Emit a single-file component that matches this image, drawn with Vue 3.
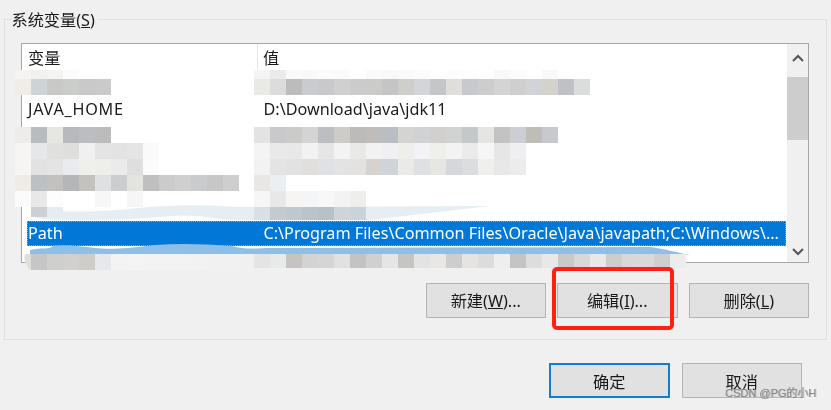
<script setup>
const rows = [
  { name: '', value: '' },
  { name: 'JAVA_HOME', value: 'D:\\Download\\java\\jdk11', caps: true },
  { name: '', value: '' },
  { name: '', value: '' },
  { name: '', value: '' },
  { name: '', value: '' },
  { name: 'Path', value: 'C:\\Program Files\\Common Files\\Oracle\\Java\\javapath;C:\\Windows\\...', selected: true },
  { name: '', value: '' }
]

const strips = [
  { x: 15, y: 70, h: 9, colors: ['#f6f4f2', '#f1f1ef', '#f4f4f2', '#fbfbfb'] },
  { x: 15, y: 79, h: 16, colors: ['#f0ece8', '#ced3d6', '#c9c9c7', '#cbcdcb', '#c9c9c9', '#cacaca'] },
  { x: 15, y: 127, h: 16, colors: ['#eeeceb', '#b9bcbf', '#e6e6e2', '#b8b9bd', '#bcbdc0', '#bcbcbc'] },
  { x: 15, y: 143, h: 16, colors: ['#f6f5f4', '#e5e7e9', '#e0e0de', '#dededc', '#f0f0f0', '#e5e4e4', '#e3e3e3', '#e5e5e5', '#fafafa'] },
  { x: 15, y: 159, h: 16, colors: ['#f6f5f4', '#e2e2e2', '#e4e4e4', '#e9ebee', '#efefec', '#eeeeeb', '#ebebeb', '#dedede', '#fbfbfb'] },
  { x: 15, y: 175, h: 16, colors: ['#efebe7', '#bcc0c3', '#c3c1bf', '#b5b6b7', '#c3c2bf', '#dfe0e2', '#cccdce', '#e3e3df', '#bfbfbf', '#cbcbcb', '#d0cfcf', '#c9cbcc', '#c7c7c7', '#cdcecd'] },
  { x: 15, y: 191, h: 16, colors: ['#fbfbfb', '#e8e8e8', '#fdfdfd', '#ffffff', '#ffffff', '#f7f7f7', '#ffffff', '#f6f6f6'] },
  { x: 31, y: 207, h: 10, colors: ['#cbd0d3', '#e6ecf1'] },
  { x: 254, y: 70, h: 9, colors: ['#f4f4f4', '#ebebeb', '#fafafa', '#f9f9f9', '#fbfbfb', '#fafafa', '#ffffff', '#fafafa', '#f9f9f9', '#fafafa', '#fcfcfc', '#ffffff', '#fcfcfc', '#fdfdfd', '#ffffff', '#f8f8f8', '#fcfcfc', '#ffffff', '#f9f9f9'] },
  { x: 254, y: 79, h: 16, colors: ['#e9e9e6', '#dcdcdc', '#bdbcbc', '#c9cbd0', '#c9c9cb', '#d0d0d0', '#cbcbcb', '#cbcbca', '#c5c5c5', '#cececb', '#d3d5d8', '#c4c6c8', '#dfdeda', '#c7c9cc', '#cdcdce', '#d3d4d3', '#cfcfcf', '#d2d3d6', '#d3d2cd', '#c0c1c4', '#dadddc'] },
  { x: 254, y: 127, h: 16, colors: ['#e3e3e3', '#c9c9cc', '#cbcbc9', '#d4d4d4', '#bcbfc1', '#cdccc9', '#bcbbb9', '#bfbdbb', '#b9bec3', '#d4d5d0', '#d1d2d4', '#d1d0cf', '#d0d3d2', '#c5c8c9', '#e5e5e4', '#c3c3c4', '#cdced3', '#c0bdb9', '#c7c9cc'] },
  { x: 254, y: 143, h: 16, colors: ['#f4f4f4', '#e9e9e9', '#e8e8e8', '#f2f2f2', '#e6e6e6', '#f3f3f3', '#e9e9e7', '#f2f2f2', '#f0f0f4', '#eeeeea', '#f3f3f7', '#efefec', '#f3f3f3', '#ebebeb', '#f6f6f6', '#e6e6e6', '#efeff1'] },
  { x: 254, y: 159, h: 16, colors: ['#f2f2f2', '#e4e4e4', '#e2e2e2', '#e0dfdd', '#e0e1e4', '#e3e3e3', '#e3e2e0', '#d6d2cf', '#ced4d8', '#eaeae8', '#dfe0e3', '#e6e6e2', '#d5d7da', '#dbdde0', '#efefed', '#e8e8e8', '#ececec'] },
  { x: 254, y: 175, h: 16, colors: ['#e9e7e6', '#eceff2'] },
  { x: 254, y: 191, h: 16, colors: ['#f6f6f6', '#e8e8e8', '#f6f5f3', '#f3f5f7', '#f8f8f8', '#f3f3f3', '#eeeeec'] },
  { x: 254, y: 207, h: 13, colors: ['#d9dfe4', '#c3cbce', '#c0c8cf', '#b9c4cc', '#b7c1c7', '#cdd5da', '#c9d3da'] },
  { x: 31, y: 254, h: 16, colors: ['#c6c6c6', '#cfcfce', '#d1d0ce', '#cecdca', '#e6e8ec', '#f3f3f3', '#f4f4f4', '#f4f3f3', '#f3f3f3', '#f3f3f3', '#f2f2f2', '#f1f1f1', '#f1f1f1', '#f0f0f0'] },
  { x: 254, y: 254, h: 14, colors: ['#e4e4e4', '#e8e9ea', '#c5c4c0', '#d3d3d3', '#d5d5d5', '#e1e1e1', '#c3c3c3', '#d0d0d0', '#e5e5e5', '#c5c5c3', '#e3e3e3', '#e9e7e6', '#cdcdcd', '#e6e4e2', '#dcdcdc', '#eeeeee', '#c4c4c4', '#dddddd', '#e8e8e8', '#c9c9c7', '#d8d8d8', '#e8e8e8', '#cdcdcb', '#d8d8d8', '#d9d9d9', '#cfcfcf', '#ececec'] }
]
</script>

<template>
  <div class="page">
    <section class="group">
      <span class="legend">系统变量(<u>S</u>)</span>
      <div class="list">
        <div class="table">
          <div class="head">
            <div class="head-cell first">变量</div>
            <div class="head-cell">值</div>
          </div>
          <div
            v-for="(row, i) in rows"
            :key="i"
            class="row"
            :class="{ selected: row.selected }"
          >
            <span :class="{ caps: row.caps }">{{ row.name }}</span>
            <span>{{ row.value }}</span>
          </div>
        </div>
        <div class="scrollbar">
          <svg class="arrow up" viewBox="0 0 12 8" width="12" height="8">
            <path d="M1 7 L6 2 L11 7" fill="none" stroke="#555" stroke-width="2" />
          </svg>
          <div class="track"><div class="thumb"></div></div>
          <svg class="arrow down" viewBox="0 0 12 8" width="12" height="8">
            <path d="M1 1 L6 6 L11 1" fill="none" stroke="#555" stroke-width="2" />
          </svg>
        </div>
      </div>
      <div class="actions">
        <button class="btn">新建(<u>W</u>)...</button>
        <button class="btn">编辑(<u>I</u>)...</button>
        <button class="btn">删除(<u>L</u>)</button>
      </div>
    </section>
    <footer class="footer">
      <button class="btn primary">确定</button>
      <button class="btn">取消</button>
    </footer>

    <div class="mosaic">
      <svg class="smears" width="831" height="410" viewBox="0 0 831 410">
        <path d="M30 207 C60 213 90 213 150 207 C200 203 220 207 254 207 L490 206 L370 220 L230 220 C210 218 195 214 170 216 C130 220 60 222 36 218 Z" fill="#e6eef3" />
        <path d="M30 250 C45 247 48 250 53 246 C65 244 80 246 95 248 C110 250 130 248 155 245 C180 243 205 244 232 246 C245 250 260 248 270 248 L650 247 C665 249 675 252 690 255 L30 254 Z" fill="#8fbfe6" />
        <path d="M25 254 L31 254 L31 270 C26 268 23 258 25 254 Z" fill="#e0dfdc" />
      </svg>
      <div
        v-for="(strip, i) in strips"
        :key="i"
        class="strip"
        :style="{ left: strip.x + 'px', top: strip.y + 'px', height: strip.h + 'px' }"
      >
        <i
          v-for="(c, j) in strip.colors"
          :key="j"
          class="cell"
          :style="{ background: c }"
        ></i>
      </div>
    </div>

    <div class="callout"></div>
    <div class="mark">CSDN @PG的小H</div>
  </div>
</template>

<style scoped>
.page {
  position: relative;
  box-sizing: border-box;
  width: 831px;
  height: 410px;
  padding: 19px 29px 0 4px;
  background: #f0f0f0;
  overflow: hidden;
  color: #1a1a1a;
  font-family: "Noto Sans", "Noto Sans CJK SC", sans-serif;
  font-size: 16.2px;
  filter: blur(0.4px);
}
.group {
  position: relative;
  box-sizing: border-box;
  width: 823px;
  margin-right: -25px;
  height: 321px;
  padding: 23px 17px 0 16px;
  border: 1.5px solid #e0e0e0;
}
.legend {
  position: absolute;
  left: 6.5px;
  top: -10.5px;
  padding-right: 3px;
  background: #f0f0f0;
  line-height: 20px;
}
.list {
  display: flex;
  box-sizing: border-box;
  height: 220px;
  overflow: hidden;
  border: 1.5px solid #a5a5ad;
  background: #fff;
}
.table {
  flex: 1;
  min-width: 0;
  padding-left: 5px;
  padding-right: 1px;
}
.head {
  display: grid;
  grid-template-columns: 231px 1fr;
  height: 28px;
  margin-left: -5px;
  line-height: 29px;
}
.head-cell {
  padding-left: 6px;
}
.head-cell.first {
  width: 236px;
  box-sizing: border-box;
  border-right: 1px solid #e4e4e4;
}
.head-cell + .head-cell {
  margin-left: 4px;
}
.row {
  display: grid;
  grid-template-columns: 235.5px 1fr;
  box-sizing: border-box;
  height: 24.8px;
  padding-left: 1px;
  line-height: 25px;
  white-space: nowrap;
}
.caps {
  letter-spacing: 0.75px;
}
.row.selected {
  background: #0078d7;
  color: #fff;
  outline: 1px dotted #d9925a;
  outline-offset: -1px;
}
.scrollbar {
  display: flex;
  flex-direction: column;
  align-items: center;
  flex: none;
  width: 21px;
  background: #f0f0f0;
}
.arrow {
  flex: none;
}
.arrow.up {
  margin: 10px 0 9px;
}
.arrow.down {
  margin: 9px 0 6px;
}
.track {
  flex: 1;
  align-self: stretch;
}
.thumb {
  height: 63px;
  margin-top: 5.5px;
  background: #cdcdcd;
}
.actions {
  display: flex;
  justify-content: flex-end;
  gap: 11px;
  margin-top: 19.5px;
}
.btn {
  box-sizing: border-box;
  width: 120.5px;
  height: 35px;
  padding: 0;
  border: 1.5px solid #b4b4b4;
  background: #e1e1e1;
  color: #1a1a1a;
  font: inherit;
}
.footer {
  display: flex;
  justify-content: flex-end;
  gap: 12px;
  margin-top: 23px;
}
.primary {
  border: 2px solid #0f7fd6;
}
.mosaic {
  position: absolute;
  inset: 0;
  pointer-events: none;
}
.smears {
  position: absolute;
  left: 0;
  top: 0;
}
.strip {
  position: absolute;
  display: flex;
}
.cell {
  width: 16px;
  height: 100%;
}
.callout {
  position: absolute;
  left: 552px;
  top: 267px;
  width: 122px;
  height: 63px;
  box-sizing: border-box;
  border: 4px solid #ff2012;
  border-radius: 5px;
}
.mark {
  position: absolute;
  left: 725px;
  top: 384px;
  font-family: "Liberation Sans", "Noto Sans CJK SC", sans-serif;
  font-size: 11px;
  color: rgba(125, 125, 125, 0.85);
  text-shadow: 1px 0 0 rgba(150, 150, 150, 0.6);
  white-space: nowrap;
}
</style>

<style>
html, body {
  margin: 0;
  background: #f0f0f0;
}
</style>
